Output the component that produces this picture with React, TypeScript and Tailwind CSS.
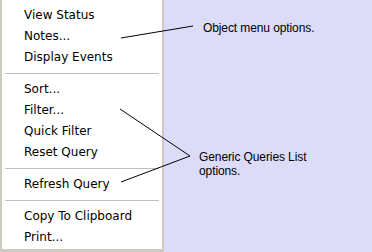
import React from "react";

type Entry = { label: string } | { sep: true };

const entries: Entry[] = [
  { label: "View Status" },
  { label: "Notes..." },
  { label: "Display Events" },
  { sep: true },
  { label: "Sort..." },
  { label: "Filter..." },
  { label: "Quick Filter" },
  { label: "Reset Query" },
  { sep: true },
  { label: "Refresh Query" },
  { sep: true },
  { label: "Copy To Clipboard" },
  { label: "Print..." },
];

const ContextMenu = () => (
  <div className="w-[164px] h-[252px] shrink-0 bg-white border-l-2 border-r-2 border-b-[3px] border-[#cdc9c0] pt-[4.5px]">
    {entries.map((e, i) =>
      "sep" in e ? (
        <div key={i} className="h-[11px] flex items-center pl-[3px] pr-[3px]">
          <div className="w-full h-px bg-[#c2bfb6]" />
        </div>
      ) : (
        <div
          key={i}
          className="h-[21px] flex items-center pl-[22px] text-[12px] text-black leading-none whitespace-nowrap"
        >
          {e.label}
        </div>
      )
    )}
  </div>
);

export default function App() {
  return (
    <div
      className="relative w-[372px] h-[252px] overflow-hidden flex bg-[#dddcf8]"
      style={{ fontFamily: "'DejaVu Sans', Verdana, sans-serif" }}
    >
      <ContextMenu />
      <div
        className="flex-1 flex flex-col text-[12px] leading-[14px] text-black tracking-[-0.1px]"
        style={{ fontFamily: "'Liberation Sans', Arial, sans-serif" }}
      >
        <div className="pt-[21px] pl-[39px]">Object menu options.</div>
        <div className="pt-[115px] pl-[35px]">
          Generic Queries List
          <br />
          options.
        </div>
      </div>
      <svg
        className="absolute inset-0 pointer-events-none"
        width="372"
        height="252"
        viewBox="0 0 372 252"
      >
        <g stroke="#000" strokeWidth="1" fill="none">
          <line x1="121" y1="38" x2="193" y2="26" />
          <polyline points="120,109 190,156 121,182" />
        </g>
      </svg>
    </div>
  );
}
